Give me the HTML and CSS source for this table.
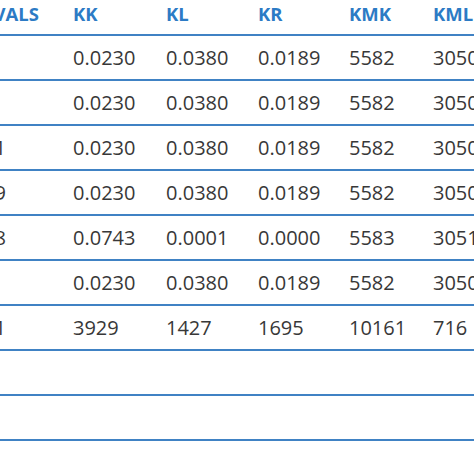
FILE: index.html
```html
<!DOCTYPE html>
<html>
<head>
<meta charset="utf-8">
<link rel="stylesheet" href="styles.css">
</head>
<body>
<table class="grid">
  <colgroup>
    <col class="c-first">
    <col class="c-kk">
    <col class="c-kl">
    <col class="c-kr">
    <col class="c-kmk">
    <col class="c-kml">
    <col class="c-rest">
  </colgroup>
  <thead>
    <tr class="head">
      <th>INTERVALS</th>
      <th>KK</th>
      <th>KL</th>
      <th>KR</th>
      <th>KMK</th>
      <th>KML</th>
      <th>KMR</th>
    </tr>
  </thead>
  <tbody>
    <tr><td></td><td>0.0230</td><td>0.0380</td><td>0.0189</td><td>5582</td><td>3050</td><td>1876</td></tr>
    <tr><td></td><td>0.0230</td><td>0.0380</td><td>0.0189</td><td>5582</td><td>3050</td><td>1876</td></tr>
    <tr><td>0.00001</td><td>0.0230</td><td>0.0380</td><td>0.0189</td><td>5582</td><td>3050</td><td>1876</td></tr>
    <tr><td>0.00129</td><td>0.0230</td><td>0.0380</td><td>0.0189</td><td>5582</td><td>3050</td><td>1876</td></tr>
    <tr><td>0.00118</td><td>0.0743</td><td>0.0001</td><td>0.0000</td><td>5583</td><td>3051</td><td>1877</td></tr>
    <tr><td></td><td>0.0230</td><td>0.0380</td><td>0.0189</td><td>5582</td><td>3050</td><td>1876</td></tr>
    <tr><td>0.00001</td><td>3929</td><td>1427</td><td>1695</td><td>10161</td><td>716</td><td>843</td></tr>
    <tr class="empty"><td></td><td></td><td></td><td></td><td></td><td></td><td></td></tr>
    <tr class="empty"><td></td><td></td><td></td><td></td><td></td><td></td><td></td></tr>
    <tr class="empty"><td></td><td></td><td></td><td></td><td></td><td></td><td></td></tr>
  </tbody>
</table>
</body>
</html>
```
FILE: styles.css
```css
html, body {
  margin: 0;
  padding: 0;
  background: #ffffff;
  overflow: hidden;
}

.grid {
  border-collapse: collapse;
  table-layout: fixed;
  width: 620px;
  margin-left: -68px;
  font-family: "Open Sans", "Noto Sans", sans-serif;
  color: #383838;
}

.c-first { width: 141px; }
.c-kk { width: 93px; }
.c-kl { width: 92px; }
.c-kr { width: 91px; }
.c-kmk { width: 84px; }
.c-kml { width: 60px; }
.c-rest { width: 60px; }

.grid th,
.grid td {
  box-sizing: border-box;
}

.head th {
  height: 35px;
  padding: 0 0 8px 0;
  text-align: left;
  vertical-align: middle;
  font-size: 18.5px;
  font-weight: 700;
  color: #2c7bc5;
  border-bottom: 2px solid #4082c4;
}

.grid td {
  height: 45px;
  padding: 0;
  text-align: left;
  vertical-align: middle;
  font-size: 20px;
  font-weight: 400;
  border-bottom: 2px solid #4082c4;
  white-space: nowrap;
}

.grid th:first-child {
  padding-left: 7px;
}

.grid td:first-child {
  padding-left: 0;
}
```
